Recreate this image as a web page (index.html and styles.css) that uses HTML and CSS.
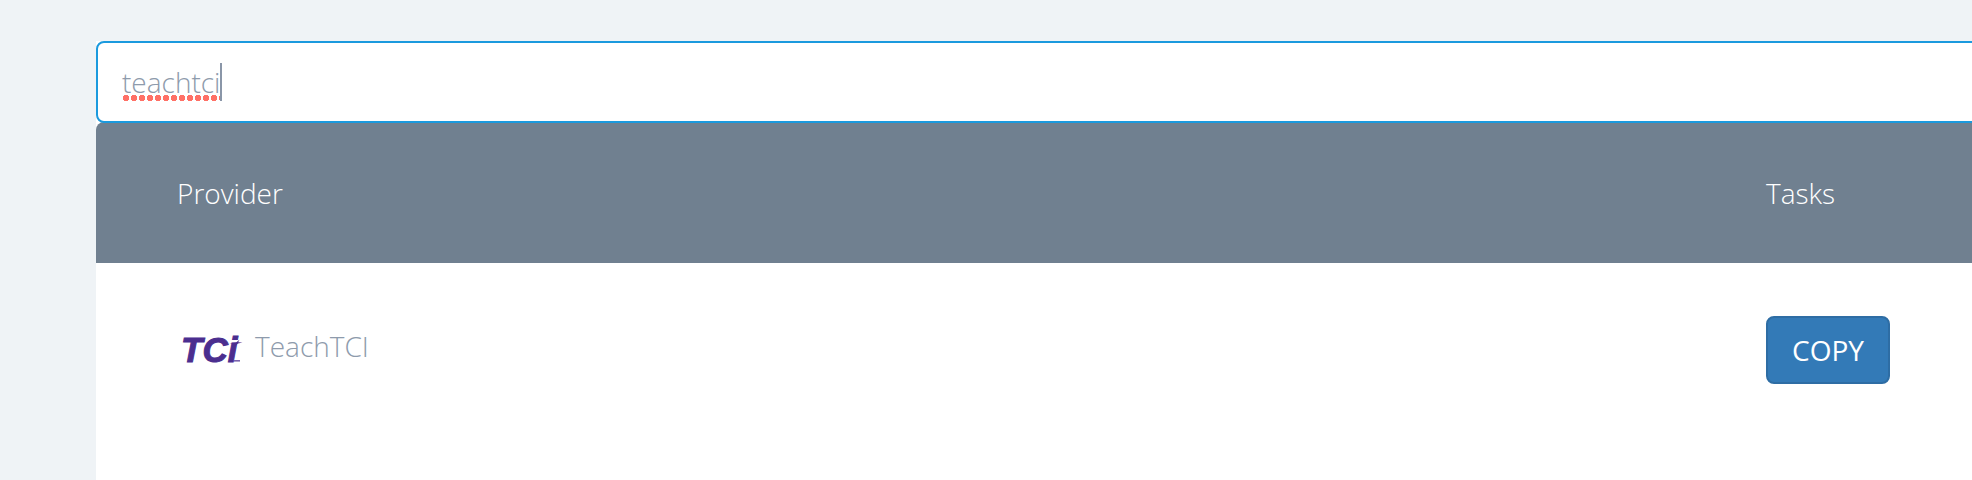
FILE: index.html
```html
<!DOCTYPE html>
<html lang="en">
<head>
<meta charset="utf-8">
<title>Providers</title>
<link rel="stylesheet" href="styles.css">
</head>
<body>
<main class="panel">
  <div class="search">
    <span class="query">teachtci</span><span class="caret"></span>
  </div>
  <div class="table-head">
    <div class="col-provider">Provider</div>
    <div class="col-tasks">Tasks</div>
  </div>
  <div class="table-row">
    <div class="col-provider provider">
      <span class="logo">
        <span class="logo-text">TCi</span>
        <svg class="logo-mark" viewBox="0 0 14 30" width="14" height="30" aria-hidden="true">
          <path d="M0 10.2 L7 9.4 L10.5 6.8 L9.2 9.2 L13.5 9.5 L9 10.4 L6.6 12.6 L7.2 10.5 Z" fill="#4b2e8f"/>
          <rect x="5" y="27" width="6" height="1.6" fill="#7a63ad"/>
        </svg>
      </span>
      <span class="provider-name">TeachTCI</span>
    </div>
    <div class="col-tasks">
      <button class="copy" type="button">COPY</button>
    </div>
  </div>
</main>
</body>
</html>
```

FILE: styles.css
```css
* { box-sizing: border-box; }
html, body { margin: 0; height: 480px; overflow: hidden; }
body {
  background: #eff3f6;
  font-family: "Open Sans", sans-serif;
  font-weight: 300;
  padding: 41px 0 0 96px;
}
.panel {
  width: 1960px;
  height: 439px;
  background: #fff;
  display: flex;
  flex-direction: column;
}
.search {
  height: 82px;
  border: 2px solid #1b9ade;
  border-radius: 8px;
  background: #fff;
  padding: 0 0 0 24px;
  display: flex;
  align-items: center;
  position: relative;
  z-index: 1;
}
.query {
  font-size: 28px;
  line-height: 38px;
  color: #8e9bac;
  background-image: radial-gradient(circle at 4px 3px, #ff7066 3px, transparent 3.4px);
  background-size: 8px 6px;
  background-repeat: repeat-x;
  background-position: 0 bottom;
}
.caret {
  width: 2px;
  height: 38px;
  background: #8a96a8;
}
.table-head {
  height: 141px;
  background: #708090;
  border-radius: 8px 0 0 0;
  margin-top: -1px;
  padding: 0 0 0 81px;
  display: flex;
  align-items: center;
  color: #fff;
  font-size: 28px;
}
.col-provider { width: 1589px; flex: none; }
.table-row {
  padding: 53px 0 0 81px;
  display: flex;
  align-items: flex-start;
}
.provider {
  display: flex;
  align-items: center;
  gap: 14px;
  height: 60px;
}
.logo {
  display: flex;
  align-items: flex-start;
  width: 60px;
  margin: 8px 0 0 4px;
}
.logo-text {
  font-family: "Liberation Sans", sans-serif;
  font-weight: 700;
  font-style: italic;
  font-size: 35px;
  line-height: 34px;
  color: #4b2e8f;
  -webkit-text-stroke: 1px #4b2e8f;
}
.logo-mark { margin: 0 0 0 -8px; flex: none; }
.provider-name {
  font-size: 28px;
  color: #8e9bac;
}
.copy {
  width: 124px;
  height: 68px;
  background: #337ab7;
  border: 2px solid #2e6da4;
  border-radius: 8px;
  color: #fff;
  font-family: "Open Sans", sans-serif;
  font-weight: 400;
  font-size: 28px;
  padding: 0;
}
```
